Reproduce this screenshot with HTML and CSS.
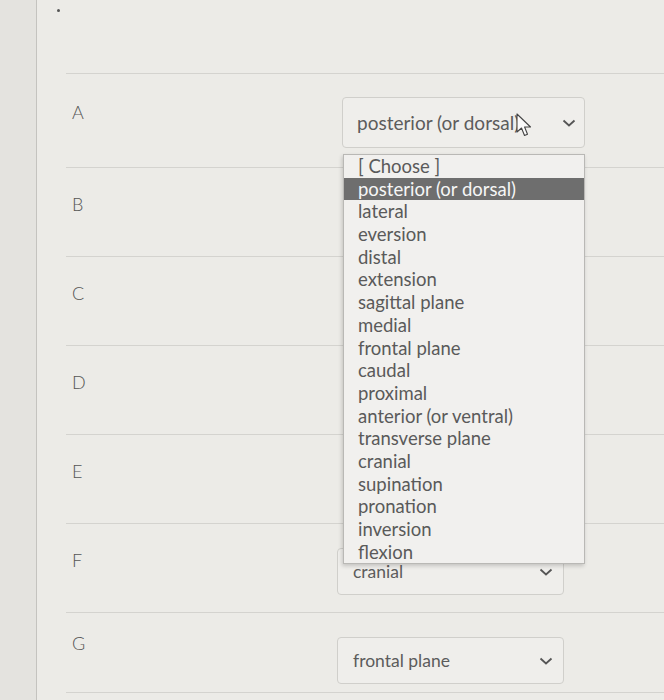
FILE: index.html
```html
<!DOCTYPE html>
<html>
<head>
<meta charset="utf-8">
<link rel="stylesheet" href="styles.css">
</head>
<body>
<div class="page">
  <div class="gutter"></div>
  <div class="content">
    <div class="head"><span class="dot"></span></div>
    <div class="row row-a">
      <div class="label">A</div>
      <div class="select select-open">
        <span class="value">posterior (or dorsal)</span>
        <svg class="chev" width="14" height="8" viewBox="0 0 14 8"><path d="M1.5 1.5 L7 6.5 L12.5 1.5" fill="none" stroke="#555" stroke-width="1.8"/></svg>
        <svg class="cursor" width="18" height="26" viewBox="0 0 18 26"><path d="M1 1 L1 19 L5.5 15 L8.5 22.5 L11.5 21.2 L8.6 14 L14.5 14 Z" fill="#fafafa" stroke="#444" stroke-width="1.1" stroke-linejoin="round"/></svg>
        <ul class="menu">
          <li>[ Choose ]</li>
          <li class="active">posterior (or dorsal)</li>
          <li>lateral</li>
          <li>eversion</li>
          <li>distal</li>
          <li>extension</li>
          <li>sagittal plane</li>
          <li>medial</li>
          <li>frontal plane</li>
          <li>caudal</li>
          <li>proximal</li>
          <li>anterior (or ventral)</li>
          <li>transverse plane</li>
          <li>cranial</li>
          <li>supination</li>
          <li>pronation</li>
          <li>inversion</li>
          <li>flexion</li>
        </ul>
      </div>
    </div>
    <div class="row"><div class="label">B</div><div class="select select-hidden"></div></div>
    <div class="row"><div class="label">C</div><div class="select select-hidden"></div></div>
    <div class="row"><div class="label">D</div><div class="select select-hidden"></div></div>
    <div class="row"><div class="label">E</div><div class="select select-hidden"></div></div>
    <div class="row">
      <div class="label">F</div>
      <div class="select">
        <span class="value">cranial</span>
        <svg class="chev" width="14" height="8" viewBox="0 0 14 8"><path d="M1.5 1.5 L7 6.5 L12.5 1.5" fill="none" stroke="#555" stroke-width="1.8"/></svg>
      </div>
    </div>
    <div class="row row-last">
      <div class="label">G</div>
      <div class="select">
        <span class="value">frontal plane</span>
        <svg class="chev" width="14" height="8" viewBox="0 0 14 8"><path d="M1.5 1.5 L7 6.5 L12.5 1.5" fill="none" stroke="#555" stroke-width="1.8"/></svg>
      </div>
    </div>
  </div>
</div>
</body>
</html>
```

FILE: styles.css
```css
html, body {
  margin: 0;
  padding: 0;
}
body {
  background: #ecebe7;
  font-family: Lato, "Liberation Sans", sans-serif;
  color: #595959;
  width: 664px;
  height: 700px;
  overflow: hidden;
}
.page {
  display: flex;
  height: 700px;
}
.gutter {
  width: 36px;
  flex: none;
  background: #e4e3df;
  border-right: 1px solid #c4c3bf;
}
.content {
  flex: 1;
  padding-left: 20px;
}
.head {
  height: 64px;
  padding-top: 9px;
}
.dot {
  display: block;
  width: 3px;
  height: 3px;
  border-radius: 50%;
  background: #555;
}
.row {
  display: flex;
  align-items: flex-start;
  height: 88px;
  margin-left: 9px;
  border-top: 1px solid #d4d3cf;
}
.row-a {
  height: 93px;
}
.row-last {
  height: 79px;
  border-bottom: 1px solid #d4d3cf;
}
.label {
  width: 271px;
  flex: none;
  padding-left: 6px;
  padding-top: 24px;
  font-size: 18px;
  font-weight: 300;
  line-height: 24px;
  color: #555;
  box-sizing: border-box;
}
.row-a .label {
  width: 276px;
  padding-top: 26px;
}
.row-last .label {
  padding-top: 18px;
}
.select {
  position: relative;
  display: flex;
  align-items: center;
  justify-content: space-between;
  box-sizing: border-box;
  width: 227px;
  height: 47px;
  margin-top: 24px;
  padding: 0 10px 0 15px;
  border: 1px solid #d0cfcb;
  border-radius: 4px;
  background: #efeeeb;
  font-size: 17.5px;
}
.select-hidden {
  width: 230px;
  margin-left: 10px;
}
.select-open {
  width: 243px;
  height: 51px;
  margin-top: 23px;
  font-size: 19px;
  padding-left: 14px;
  padding-right: 8px;
}
.value {
  color: #5c5c5c;
}
.chev {
  flex: none;
}
.cursor {
  position: absolute;
  left: 173px;
  top: 15px;
}
.menu {
  position: absolute;
  left: 0;
  top: 56px;
  width: 240px;
  margin: 0;
  padding: 0;
  list-style: none;
  background: #f1f0ee;
  border: 1px solid #b9b8b5;
  box-shadow: -1px 2px 4px rgba(0, 0, 0, 0.18);
  z-index: 5;
}
.menu li {
  height: 22.7px;
  line-height: 22.7px;
  padding-left: 14px;
  font-size: 18.5px;
  color: #5a5a5a;
  white-space: nowrap;
}
.menu li.active {
  background: #6e6e6e;
  color: #f6f6f6;
}
```
